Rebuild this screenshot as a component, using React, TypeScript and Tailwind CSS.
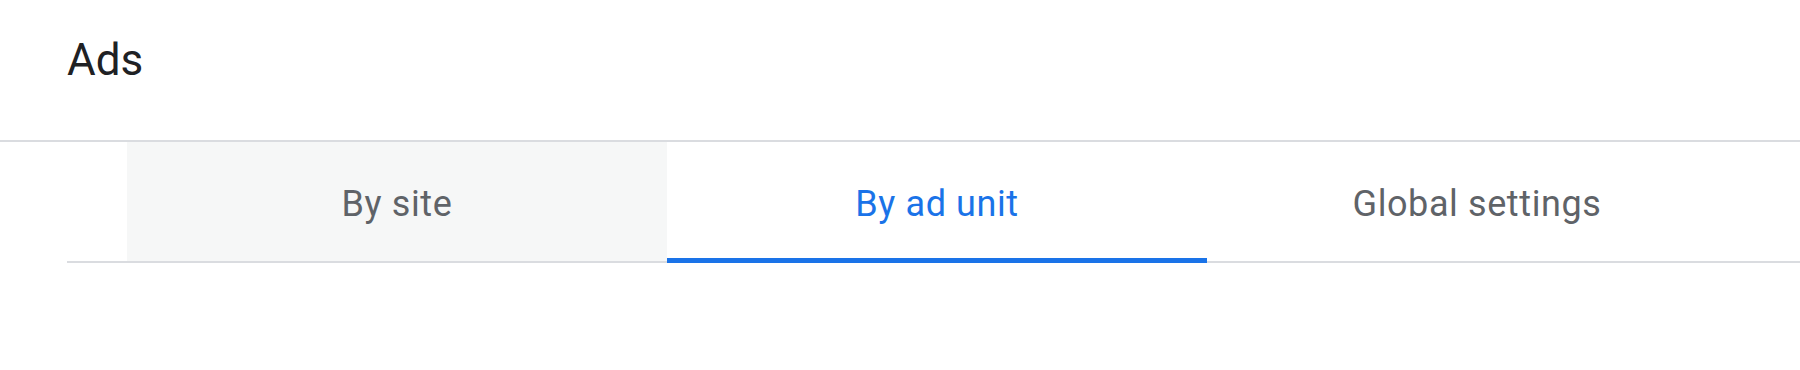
import React from "react";

const tabs = ["By site", "By ad unit", "Global settings"];

export default function App() {
  const selected = 1;
  return (
    <div className="w-[1800px] h-[370px] bg-white font-['Roboto',sans-serif]">
      <header className="h-[142px] border-b-2 border-[#dadce0] pl-[67px] pt-[38px]">
        <h1 className="text-[44px] leading-none font-normal text-[#202124]">Ads</h1>
      </header>
      <nav className="ml-[67px] pl-[60px] flex border-b-2 border-[#dadce0] h-[121px]">
        {tabs.map((t, i) => (
          <div
            key={t}
            className={
              i === 0
                ? "relative w-[540px] h-full flex items-center justify-center pt-[4px] bg-[#f6f7f7]"
                : "relative w-[540px] h-full flex items-center justify-center pt-[4px]"
            }
          >
            <span
              className={
                i === selected
                  ? "text-[36px] leading-none font-normal tracking-[0.6px] text-[#1a73e8]"
                  : "text-[36px] leading-none font-normal tracking-[0.6px] text-[#5f6368]"
              }
            >
              {t}
            </span>
            {i === selected && (
              <div className="absolute left-0 right-0 bottom-[-2px] h-[5px] bg-[#1a73e8]" />
            )}
          </div>
        ))}
      </nav>
    </div>
  );
}
